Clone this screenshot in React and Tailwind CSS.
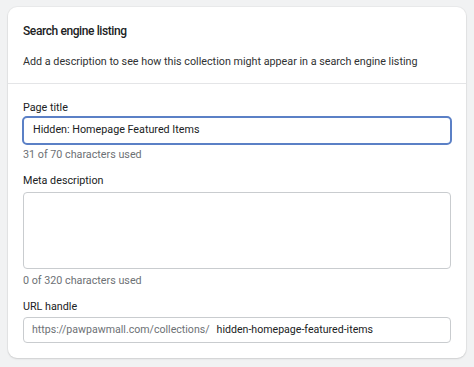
export default function App() {
  return (
    <div className="w-[474px] h-[367px] bg-[#f1f2f3] pt-[7px] px-[8px] font-['Roboto',sans-serif] text-[#202223]">
      <div className="bg-white rounded-[9px] shadow-[0_0_0_1px_rgba(0,0,0,0.03),0_1px_2px_rgba(0,0,0,0.12)] h-[351px] overflow-hidden">
        {/* Header */}
        <div className="h-[77px] px-[15px] pt-[16px] border-b border-[#e4e5e7]">
          <h2 className="text-[12px] leading-[16px] font-medium tracking-[-0.4px] whitespace-nowrap">Search engine listing</h2>
          <p className="mt-[15px] text-[10.75px] leading-[16px] text-[#303233] whitespace-nowrap">
            Add a description to see how this collection might appear in a search engine listing
          </p>
        </div>

        {/* Fields */}
        <div className="px-[15px] pt-[17px]">
          <label className="block text-[10.75px] leading-[14px]">Page title</label>
          <div className="mt-[1px] -mx-[1px] h-[29px] rounded-[5px] border-2 border-[#5b80c6] flex items-center px-[9px]">
            <span className="text-[10.75px] whitespace-nowrap">Hidden: Homepage Featured Items</span>
          </div>
          <p className="mt-[3px] text-[10.75px] leading-[14px] text-[#6d7175]">31 of 70 characters used</p>

          <label className="block mt-[12px] text-[10.75px] leading-[14px]">Meta description</label>
          <div className="mt-[4px] h-[77px] rounded-[4px] border border-[#c9cccf]" />
          <p className="mt-[5px] text-[10.75px] leading-[14px] text-[#6d7175]">0 of 320 characters used</p>

          <label className="block mt-[12px] text-[10.75px] leading-[14px]">URL handle</label>
          <div className="mt-[3px] h-[26px] rounded-[4px] border border-[#c9cccf] flex items-center px-[8px] text-[10.6px] whitespace-nowrap">
            <span className="text-[#6d7175]">https://pawpawmall.com/collections/</span>
            <span className="ml-[7px]">hidden-homepage-featured-items</span>
          </div>
        </div>
      </div>
    </div>
  );
}
